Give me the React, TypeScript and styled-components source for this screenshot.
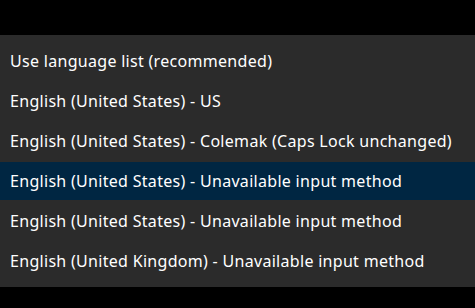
import React from "react";
import styled, { createGlobalStyle } from "styled-components";

const GlobalStyle = createGlobalStyle`
  html, body {
    margin: 0;
    padding: 0;
    background: #000000;
  }
  body {
    font-family: "Noto Sans", "Open Sans", sans-serif;
  }
`;

const Page = styled.div`
  width: 475px;
  height: 308px;
  background: #000000;
  padding-top: 35px;
  box-sizing: border-box;
  overflow: hidden;
`;

const Menu = styled.ul`
  list-style: none;
  margin: 0;
  padding: 6px 0;
  background: #2b2b2b;
  display: flex;
  flex-direction: column;
`;

const Option = styled.li<{ $selected?: boolean }>`
  height: 38px;
  margin: 1px 0;
  padding: 0 10px;
  display: flex;
  align-items: center;
  white-space: nowrap;
  color: #ffffff;
  font-size: 16px;
  letter-spacing: 0.3px;
  background: ${(p) => (p.$selected ? "#002642" : "transparent")};
`;

const options = [
  "Use language list (recommended)",
  "English (United States) - US",
  "English (United States) - Colemak (Caps Lock unchanged)",
  "English (United States) - Unavailable input method",
  "English (United States) - Unavailable input method",
  "English (United Kingdom) - Unavailable input method",
];

export default function App() {
  return (
    <>
      <GlobalStyle />
      <Page>
        <Menu>
          {options.map((o, i) => (
            <Option key={i} $selected={i === 3}>
              {o}
            </Option>
          ))}
        </Menu>
      </Page>
    </>
  );
}
